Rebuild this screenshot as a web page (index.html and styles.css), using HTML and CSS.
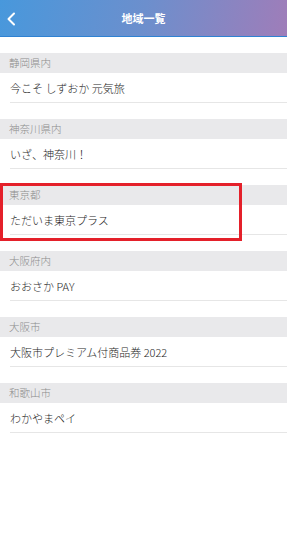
FILE: index.html
```html
<!DOCTYPE html>
<html lang="ja">
<head>
<meta charset="utf-8">
<link rel="stylesheet" href="styles.css">
</head>
<body>
<header class="nav">
  <svg class="back" width="10" height="14" viewBox="0 0 10 14"><path d="M8 1.5 L2.5 7 L8 12.5" fill="none" stroke="#fff" stroke-width="2" stroke-linecap="round" stroke-linejoin="round"/></svg>
  <h1 class="title">地域一覧</h1>
</header>
<main class="list">
  <section class="group"><div class="group-label">静岡県内</div><div class="item">今こそ しずおか 元気旅</div></section>
  <section class="group"><div class="group-label">神奈川県内</div><div class="item">いざ、神奈川！</div></section>
  <section class="group"><div class="group-label">東京都</div><div class="item">ただいま東京プラス</div></section>
  <section class="group"><div class="group-label">大阪府内</div><div class="item">おおさか PAY</div></section>
  <section class="group"><div class="group-label">大阪市</div><div class="item">大阪市プレミアム付商品券 2022</div></section>
  <section class="group"><div class="group-label">和歌山市</div><div class="item">わかやまペイ</div></section>
</main>
<div class="highlight"></div>
</body>
</html>
```
FILE: styles.css
```css
html, body { margin: 0; padding: 0; background: #fff; }
body {
  font-family: "Noto Sans CJK JP", "Noto Sans", sans-serif;
  position: relative;
  width: 287px;
  height: 555px;
  overflow: hidden;
}
.nav {
  height: 36px;
  border-bottom: 1px solid #2f82d2;
  background: linear-gradient(100deg, #4898dc 0%, #6c8fcd 50%, #9f7db9 100%);
  display: flex;
  align-items: center;
  justify-content: center;
  position: relative;
}
.back { position: absolute; left: 6px; top: 12px; }
.title {
  margin: 0;
  color: #fff;
  font-size: 11px;
  font-weight: 700;
  line-height: 1;
}
.list { padding-top: 16px; }
.group { margin-bottom: 16px; }
.group-label {
  height: 20px;
  background: #e9e9eb;
  color: #8c8c8c;
  font-size: 10.5px;
  font-weight: 300;
  line-height: 20px;
  padding-left: 9px;
}
.item {
  height: 30px;
  line-height: 30px;
  font-size: 11px;
  font-weight: 300;
  color: #1e1e1e;
  padding-left: 10px;
  position: relative;
}
.item::after {
  content: "";
  position: absolute;
  left: 10px;
  right: 0;
  bottom: 0;
  height: 1px;
  background: #e6e6e6;
}
.highlight {
  position: absolute;
  left: 0;
  top: 183px;
  width: 236px;
  height: 52px;
  border: 3px solid #e4202a;
}
```
